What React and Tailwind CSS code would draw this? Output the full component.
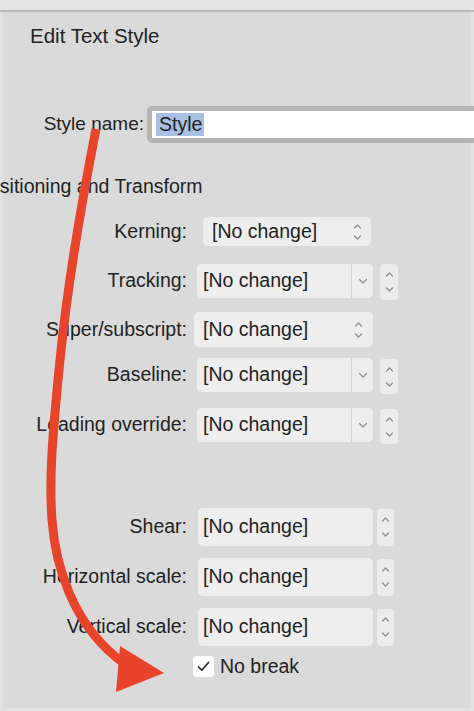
import React from "react";

function UpDown({ gap = 10 }) {
  const h = gap + 8;
  return (
    <svg width="9" height={h} viewBox={`0 0 9 ${h}`} fill="none" stroke="#8c8c8c" strokeWidth="1.2" strokeLinecap="round" strokeLinejoin="round">
      <path d="M1.5 5 L4.5 2 L7.5 5" />
      <path d={`M1.5 ${h - 5} L4.5 ${h - 2} L7.5 ${h - 5}`} />
    </svg>
  );
}

function Down() {
  return (
    <svg width="10" height="7" viewBox="0 0 10 7" fill="none" stroke="#8c8c8c" strokeWidth="1.2" strokeLinecap="round" strokeLinejoin="round">
      <path d="M1.5 1.5 L5 5 L8.5 1.5" />
    </svg>
  );
}

function Stepper({ cls }) {
  return (
    <div className={`flex items-center justify-center rounded-[4px] bg-[#ececec] ${cls}`}>
      <UpDown gap={14} />
    </div>
  );
}

function Label({ children }) {
  return <div className="w-[184px] shrink-0 text-right whitespace-nowrap text-[19.5px]">{children}</div>;
}

function ComboField() {
  return (
    <div className="ml-[10px] flex h-[34px] w-[176px] items-stretch rounded-[5px] bg-[#eeeeee]">
      <div className="flex flex-1 items-center pl-[6px]">[No change]</div>
      <div className="flex w-[22px] items-center justify-center border-l border-[#d6d6d6]"><Down /></div>
    </div>
  );
}

export default function App() {
  return (
    <div className="relative w-[474px] h-[711px] overflow-hidden bg-[#dadada] font-['Liberation_Sans',Arial,sans-serif] text-[19.5px] text-[#222222]">
      <div className="h-[12px] bg-[#e4e4e4] border-b-2 border-[#bdbdbd]" />
      <div className="flex h-[699px] flex-col border-x-[3px] border-b-[3px] border-[#e1e1e1]">
        <div className="mt-[12px] h-[24px] pl-[27px] leading-[24px] text-[20.5px]">Edit Text Style</div>

        {/* Style name */}
        <div className="mt-[58px] flex h-[37px] items-center">
          <div className="w-[141px] shrink-0 text-right whitespace-nowrap text-[19px]">Style name:</div>
          <div className="ml-[3px] flex h-[37px] w-[340px] shrink-0 items-center rounded-[5px] border-[5px] border-[#b4b4b4] bg-white pl-[4px]">
            <span className="bg-[#a8c0e2] pl-[3px] pr-[2px] leading-[23px]">Style</span>
          </div>
        </div>

        {/* Heading */}
        <div className="mt-[31px] ml-[-27px] h-[24px] leading-[24px] whitespace-nowrap text-[19.5px]">Positioning and Transform</div>

        {/* Kerning */}
        <div className="mt-[19px] flex h-[29px] items-center">
          <Label>Kerning:</Label>
          <div className="ml-[16px] flex h-[29px] w-[168px] items-center justify-between rounded-[5px] bg-[#eeeeee] pl-[9px] pr-[9px]">
            <span>[No change]</span>
            <UpDown gap={10} />
          </div>
        </div>

        {/* Tracking */}
        <div className="mt-[18px] flex h-[36px] items-start">
          <div className="flex h-[34px] items-center"><Label>Tracking:</Label></div>
          <ComboField />
          <Stepper cls="ml-[7px] h-[36px] w-[18px]" />
        </div>

        {/* Super/subscript */}
        <div className="mt-[12px] flex h-[35px] items-center">
          <Label>Super/subscript:</Label>
          <div className="ml-[7px] flex h-[35px] w-[179px] items-center justify-between rounded-[5px] bg-[#eeeeee] pl-[9px] pr-[10px]">
            <span>[No change]</span>
            <UpDown gap={10} />
          </div>
        </div>

        {/* Baseline */}
        <div className="mt-[11px] flex h-[36px] items-start">
          <div className="flex h-[34px] items-center"><Label>Baseline:</Label></div>
          <ComboField />
          <Stepper cls="ml-[7px] mt-[1px] h-[35px] w-[18px]" />
        </div>

        {/* Leading override */}
        <div className="mt-[14px] flex h-[36px] items-start">
          <div className="flex h-[34px] items-center"><Label>Leading override:</Label></div>
          <ComboField />
          <Stepper cls="ml-[7px] mt-[1px] h-[35px] w-[18px]" />
        </div>

        {/* Shear */}
        <div className="mt-[64px] flex h-[38px] items-center">
          <Label>Shear:</Label>
          <div className="ml-[11px] flex h-[38px] w-[175px] items-center rounded-[5px] bg-[#eeeeee] pl-[5px]">[No change]</div>
          <Stepper cls="ml-[4px] h-[37px] w-[17px]" />
        </div>

        {/* Horizontal scale */}
        <div className="mt-[12px] flex h-[38px] items-center">
          <Label>Horizontal scale:</Label>
          <div className="ml-[11px] flex h-[38px] w-[175px] items-center rounded-[5px] bg-[#eeeeee] pl-[5px]">[No change]</div>
          <Stepper cls="ml-[4px] h-[37px] w-[17px]" />
        </div>

        {/* Vertical scale */}
        <div className="mt-[12px] flex h-[38px] items-center">
          <Label>Vertical scale:</Label>
          <div className="ml-[11px] flex h-[38px] w-[175px] items-center rounded-[5px] bg-[#eeeeee] pl-[5px]">[No change]</div>
          <Stepper cls="ml-[4px] h-[37px] w-[17px]" />
        </div>

        {/* No break */}
        <div className="mt-[10px] flex h-[21px] items-center pl-[190px]">
          <div className="flex h-[21px] w-[21px] items-center justify-center rounded-[4px] bg-white">
            <svg width="13" height="11" viewBox="0 0 13 11" fill="none" stroke="#2a2a2a" strokeWidth="1.7" strokeLinecap="round" strokeLinejoin="round">
              <path d="M1.5 6 L4.8 9.2 L11.5 1.5" />
            </svg>
          </div>
          <span className="ml-[6px] leading-[21px]">No break</span>
        </div>
      </div>

      {/* Red annotation arrow */}
      <svg className="pointer-events-none absolute left-0 top-0" width="474" height="711" viewBox="0 0 474 711">
        <path
          d="M96 129 C 86 180 68 280 60 360 C 52 440 49 480 52 520 C 55 560 70 625 125 664"
          fill="none"
          stroke="#e8432b"
          strokeWidth="9"
        />
        <polygon points="120,646 164,673 116,692" fill="#e8432b" />
      </svg>
    </div>
  );
}
